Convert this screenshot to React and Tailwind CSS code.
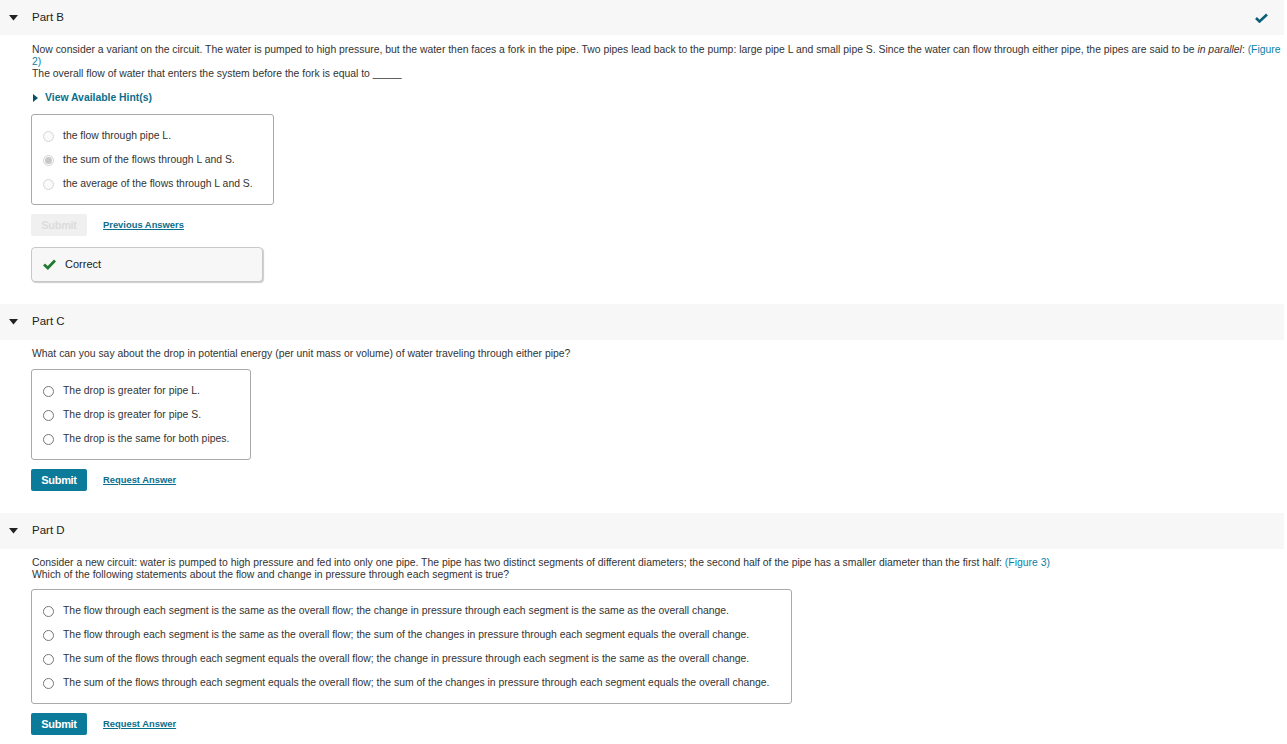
import React from 'react';

const Caret = () => (
  <svg width="9" height="6" viewBox="0 0 9 6" className="mr-[14px]">
    <path d="M0 0 L9 0 L4.5 5.5 Z" fill="#222" />
  </svg>
);

const Header = ({ title, done }) => (
  <div className={`${done ? 'h-[35px]' : 'h-[36px]'} bg-[#f7f7f7] flex items-center pl-[9px] pr-[16px] mr-[3px]`}>
    <Caret />
    <span className="text-[11.5px] text-[#222]">{title}</span>
    {done && (
      <svg width="13" height="10" viewBox="0 0 13 10" className="ml-auto">
        <path d="M1 5 L4.5 8.5 L12 1.5" stroke="#0b5f78" strokeWidth="2.6" fill="none" />
      </svg>
    )}
  </div>
);

const Radio = ({ checked, disabled }) => (
  <span
    className={`w-[11px] h-[11px] rounded-full border inline-flex items-center justify-center shrink-0 ${
      disabled ? 'border-[#d6d6d6] bg-[#fafafa]' : 'border-[#777] bg-white'
    }`}
  >
    {checked && <span className="w-[7px] h-[7px] rounded-full bg-[#c8c8c8]" />}
  </span>
);

const Options = ({ items, width, checked, disabled }) => (
  <div className={`${width} border border-[#a9a9a9] rounded-[3px] pt-[9px] pb-[8px] pl-[11px]`}>
    {items.map((t, i) => (
      <div key={i} className="h-[24px] flex items-center gap-[9px] text-[10.4px] text-[#333]">
        <Radio checked={checked === i} disabled={disabled} />
        <span>{t}</span>
      </div>
    ))}
  </div>
);

const Actions = ({ disabled, link }) => (
  <div className="flex items-center gap-[16px] mt-[9px]">
    <button
      className={`w-[56px] h-[22px] rounded-[2px] text-[11px] font-bold tracking-[-0.3px] ${
        disabled ? 'bg-[#f0f0f0] text-[#dcdcdc]' : 'bg-[#0c7a99] text-white'
      }`}
    >
      Submit
    </button>
    <a className="text-[9.4px] font-bold text-[#0b6f8c] underline">{link}</a>
  </div>
);

const App = () => {
  return (
    <div className="min-h-screen bg-white font-['Liberation_Sans',Arial,sans-serif] text-[#333]">
      <Header title="Part B" done />
      <div className="pl-[32px] pr-[5px] pt-[9px]">
        <p className="text-[10.4px] leading-[12px]">
          Now consider a variant on the circuit. The water is pumped to high pressure, but the water then faces a fork in the pipe. Two pipes lead back to the pump: large pipe L and small pipe S. Since the water can flow through either pipe, the pipes are said to be <i>in parallel</i>: <span className="text-[#0b7fa8]">(Figure 2)</span>
          <br />
          The overall flow of water that enters the system before the fork is equal to _____
        </p>
        <div className="flex items-center mt-[12px] h-[12px] text-[10.4px] font-bold text-[#0b6f8c]">
          <svg width="5" height="8" viewBox="0 0 5 8" className="mr-[7px] ml-[1px]">
            <path d="M0 0 L5 4 L0 8 Z" fill="#0b4f64" />
          </svg>
          View Available Hint(s)
        </div>
        <div className="mt-[10px] ml-[-1px]">
          <Options
            width="w-[243px]"
            disabled
            checked={1}
            items={['the flow through pipe L.', 'the sum of the flows through L and S.', 'the average of the flows through L and S.']}
          />
        </div>
        <div className="ml-[-1px]">
          <Actions disabled link="Previous Answers" />
        </div>
        <div className="mt-[11px] ml-[-1px] w-[232px] h-[35px] bg-[#f7f7f7] border border-[#c8c8c8] rounded-[4px] shadow-[1px_1px_1px_rgba(0,0,0,0.2)] flex items-center pl-[11px] gap-[9px]">
          <svg width="13" height="11" viewBox="0 0 13 11">
            <path d="M1 5.5 L4.8 9 L12 1.5" stroke="#1f7a34" strokeWidth="2.8" fill="none" />
          </svg>
          <span className="text-[11px] text-[#222]">Correct</span>
        </div>
      </div>

      <div className="mt-[22px]">
        <Header title="Part C" />
      </div>
      <div className="pl-[32px] pt-[8px]">
        <p className="text-[10.4px] leading-[12px]">
          What can you say about the drop in potential energy (per unit mass or volume) of water traveling through either pipe?
        </p>
        <div className="mt-[9px] ml-[-1px]">
          <Options
            width="w-[220px]"
            items={['The drop is greater for pipe L.', 'The drop is greater for pipe S.', 'The drop is the same for both pipes.']}
          />
        </div>
        <div className="ml-[-1px]">
          <Actions link="Request Answer" />
        </div>
      </div>

      <div className="mt-[22px]">
        <Header title="Part D" />
      </div>
      <div className="pl-[32px] pt-[8px]">
        <p className="text-[10.4px] leading-[12px]">
          Consider a new circuit: water is pumped to high pressure and fed into only one pipe. The pipe has two distinct segments of different diameters; the second half of the pipe has a smaller diameter than the first half: <span className="text-[#0b7fa8]">(Figure 3)</span>
          <br />
          Which of the following statements about the flow and change in pressure through each segment is true?
        </p>
        <div className="mt-[8px] ml-[-1px]">
          <Options
            width="w-[761px]"
            items={[
              'The flow through each segment is the same as the overall flow; the change in pressure through each segment is the same as the overall change.',
              'The flow through each segment is the same as the overall flow; the sum of the changes in pressure through each segment equals the overall change.',
              'The sum of the flows through each segment equals the overall flow; the change in pressure through each segment is the same as the overall change.',
              'The sum of the flows through each segment equals the overall flow; the sum of the changes in pressure through each segment equals the overall change.',
            ]}
          />
        </div>
        <div className="ml-[-1px]">
          <Actions link="Request Answer" />
        </div>
      </div>
    </div>
  );
};

export default App;
